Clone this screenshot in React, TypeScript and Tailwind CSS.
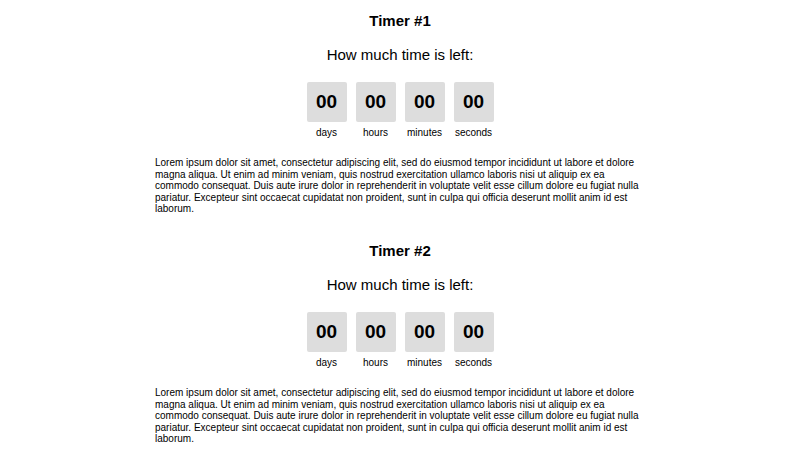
const units = ['days', 'hours', 'minutes', 'seconds']

const lorem =
  'Lorem ipsum dolor sit amet, consectetur adipiscing elit, sed do eiusmod tempor incididunt ut labore et dolore magna aliqua. Ut enim ad minim veniam, quis nostrud exercitation ullamco laboris nisi ut aliquip ex ea commodo consequat. Duis aute irure dolor in reprehenderit in voluptate velit esse cillum dolore eu fugiat nulla pariatur. Excepteur sint occaecat cupidatat non proident, sunt in culpa qui officia deserunt mollit anim id est laborum.'

function Timer({ n }: { n: number }) {
  return (
    <section className="h-[230px] pt-[12px]">
      <h2 className="text-center text-[15px] font-bold leading-[18px]">Timer #{n}</h2>
      <p className="mt-[16px] text-center text-[15px] leading-[18px]">How much time is left:</p>

      <div className="mt-[18px] flex justify-center gap-[9px]">
        {units.map((u) => (
          <div key={u} className="flex w-[40px] flex-col items-center">
            <div className="flex h-[40px] w-[40px] items-center justify-center rounded-[2px] bg-[#dddddd] text-[19px] font-bold">
              00
            </div>
            <span className="mt-[5px] text-[10px] leading-[12px] whitespace-nowrap">{u}</span>
          </div>
        ))}
      </div>

      <p className="mx-auto mt-[18px] w-[490px] text-[10px] leading-[11.5px]">{lorem}</p>
    </section>
  )
}

export default function App() {
  return (
    <div className="h-[450px] w-[800px] overflow-hidden bg-white text-black" style={{ fontFamily: '"Liberation Sans", Arial, sans-serif' }}>
      <Timer n={1} />
      <Timer n={2} />
    </div>
  )
}
